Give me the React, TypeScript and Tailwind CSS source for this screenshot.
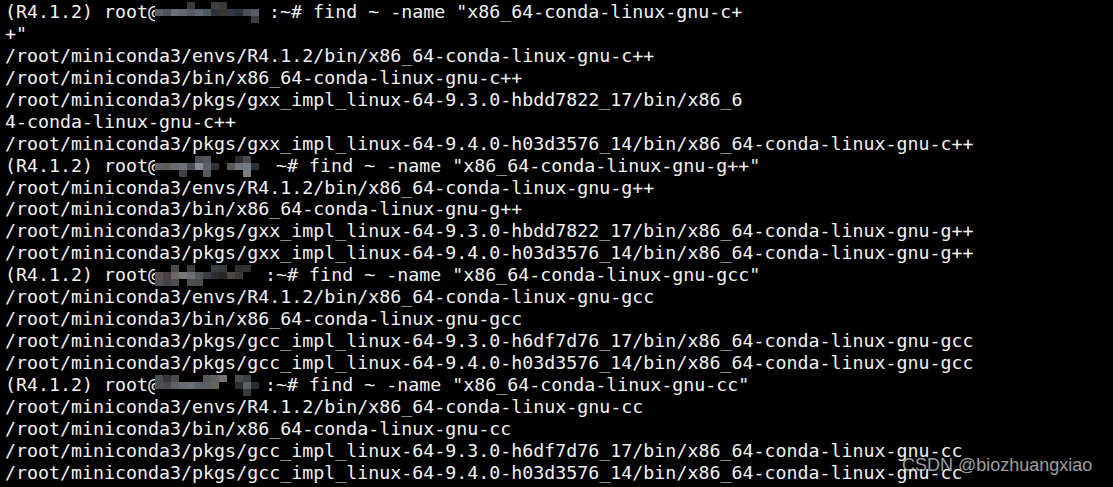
import React from 'react'

// pixelated hostname, drawn as a little grid of grey cells
const mosaics: string[][] = [
    [
        '#000,#000,#000,#000,#3a3b3f,#000,#000,#3c3f42,#36383c,#000,#000,#000,#000,#000',
        '#5a5e65,#4c5059,#6a7078,#63676f,#575b67,#5e6a72,#4e5a62,#2c323a,#3a342c,#323a44,#2a303a,#4a5058,#5a5f65,#000',
        '#000,#000,#000,#000,#000,#000,#000,#000,#000,#000,#000,#000,#3b3f43,#000',
    ].map(r => r.split(',')),
    [
        '#000,#000,#000,#000,#000,#4a4f54,#54585c,#000,#000,#000,#2a2c30,#484c50,#000,#000,#000',
        '#5c6268,#5e5d56,#686c70,#6e7276,#484b4f,#8c8c96,#5a646c,#2f343a,#000,#5a5a58,#6c747c,#6e7c88,#2c3034,#000,#000',
        '#000,#000,#000,#3e4044,#000,#000,#54595e,#000,#000,#000,#000,#7a7e82,#000,#000,#000',
    ].map(r => r.split(',')),
    [
        '#000,#000,#4c4c4e,#000,#3e3a3a,#000,#000,#3a3e44,#36383c,#000,#2a2c2e,#303236,#000,#000',
        '#5a5250,#4a4240,#6a6a6c,#7a7678,#6c7074,#54575c,#3c3e48,#2e2e34,#2a2624,#4e4640,#3c3a38,#000,#000,#000',
        '#4e5054,#404246,#4a4c50,#000,#4c4e52,#4a4c50,#000,#000,#000,#000,#000,#000,#000,#000',
    ].map(r => r.split(',')),
    [
        '#4a4c50,#3a3638,#484a4c,#000,#000,#000,#54585c,#60625e,#70726e,#000,#4a4e52,#3c4044,#000,#000',
        '#4c4e52,#484a4e,#5e6266,#686c70,#6a7074,#5a6066,#56626a,#6a6458,#000,#000,#2a2e32,#5c6064,#2a2e34,#000',
        '#000,#000,#000,#000,#000,#000,#000,#000,#000,#000,#000,#3a3c40,#000,#000',
    ].map(r => r.split(',')),
]

function Mosaic({idx, width}: {idx: number; width: number}) {
    const rows = mosaics[idx]
    return (
        <span className="inline-block align-top mt-[1px] overflow-hidden" style={{width}}>
            <span className="flex flex-col">
                {rows.map((r, i) => (
                    <span key={i} className="flex">
                        {r.map((c, j) => (
                            <span key={j} className="block w-[8px] h-[7px] shrink-0" style={{background: c}}/>
                        ))}
                    </span>
                ))}
            </span>
        </span>
    )
}

type Line = string | {pre: string; m: number; w: number; post: string}

const lines: Line[] = [
    {pre: '(R4.1.2) root@', m: 0, w: 114, post: ':~# find ~ -name "x86_64-conda-linux-gnu-c+'},
    '+"',
    '/root/miniconda3/envs/R4.1.2/bin/x86_64-conda-linux-gnu-c++',
    '/root/miniconda3/bin/x86_64-conda-linux-gnu-c++',
    '/root/miniconda3/pkgs/gxx_impl_linux-64-9.3.0-hbdd7822_17/bin/x86_6',
    '4-conda-linux-gnu-c++',
    '/root/miniconda3/pkgs/gxx_impl_linux-64-9.4.0-h03d3576_14/bin/x86_64-conda-linux-gnu-c++',
    {pre: '(R4.1.2) root@', m: 1, w: 121, post: '~# find ~ -name "x86_64-conda-linux-gnu-g++"'},
    '/root/miniconda3/envs/R4.1.2/bin/x86_64-conda-linux-gnu-g++',
    '/root/miniconda3/bin/x86_64-conda-linux-gnu-g++',
    '/root/miniconda3/pkgs/gxx_impl_linux-64-9.3.0-hbdd7822_17/bin/x86_64-conda-linux-gnu-g++',
    '/root/miniconda3/pkgs/gxx_impl_linux-64-9.4.0-h03d3576_14/bin/x86_64-conda-linux-gnu-g++',
    {pre: '(R4.1.2) root@', m: 2, w: 110, post: ':~# find ~ -name "x86_64-conda-linux-gnu-gcc"'},
    '/root/miniconda3/envs/R4.1.2/bin/x86_64-conda-linux-gnu-gcc',
    '/root/miniconda3/bin/x86_64-conda-linux-gnu-gcc',
    '/root/miniconda3/pkgs/gcc_impl_linux-64-9.3.0-h6df7d76_17/bin/x86_64-conda-linux-gnu-gcc',
    '/root/miniconda3/pkgs/gcc_impl_linux-64-9.4.0-h03d3576_14/bin/x86_64-conda-linux-gnu-gcc',
    {pre: '(R4.1.2) root@', m: 3, w: 110, post: ':~# find ~ -name "x86_64-conda-linux-gnu-cc"'},
    '/root/miniconda3/envs/R4.1.2/bin/x86_64-conda-linux-gnu-cc',
    '/root/miniconda3/bin/x86_64-conda-linux-gnu-cc',
    '/root/miniconda3/pkgs/gcc_impl_linux-64-9.3.0-h6df7d76_17/bin/x86_64-conda-linux-gnu-cc',
    '/root/miniconda3/pkgs/gcc_impl_linux-64-9.4.0-h03d3576_14/bin/x86_64-conda-linux-gnu-cc',
]

export default function App(): React.ReactElement {
    return (
        <div className="relative w-[1113px] h-[487px] overflow-hidden bg-black">
            <div
                className="flex flex-col pt-[1px] pl-[5px] text-[18.3px] leading-[21.95px] text-[#f2f2f2] whitespace-pre"
                style={{fontFamily: '"DejaVu Sans Mono", "Liberation Mono", monospace'}}>
                {lines.map((l, i) =>
                    typeof l === 'string' ? (
                        <div key={i} className="h-[21.95px]">{l}</div>
                    ) : (
                        <div key={i} className="h-[21.95px]">
                            {l.pre.slice(0, -1)}
                            <span className="inline-block w-[7px] overflow-hidden align-top">@</span>
                            <Mosaic idx={l.m} width={l.w}/>
                            {l.post}
                        </div>
                    )
                )}
                <div className="h-[21.95px] flex">
                    <span className="ml-[308px] mt-[3px] w-[10px] h-[4px] bg-[#00e000]"/>
                </div>
            </div>
            {/* csdn watermark */}
            <div
                className="absolute left-[902px] top-[454px] text-[18px] leading-[22px] text-[#c8c8c8]/80"
                style={{fontFamily: '"Liberation Sans", Arial, sans-serif'}}>
                CSDN @biozhuangxiao
            </div>
        </div>
    )
}
